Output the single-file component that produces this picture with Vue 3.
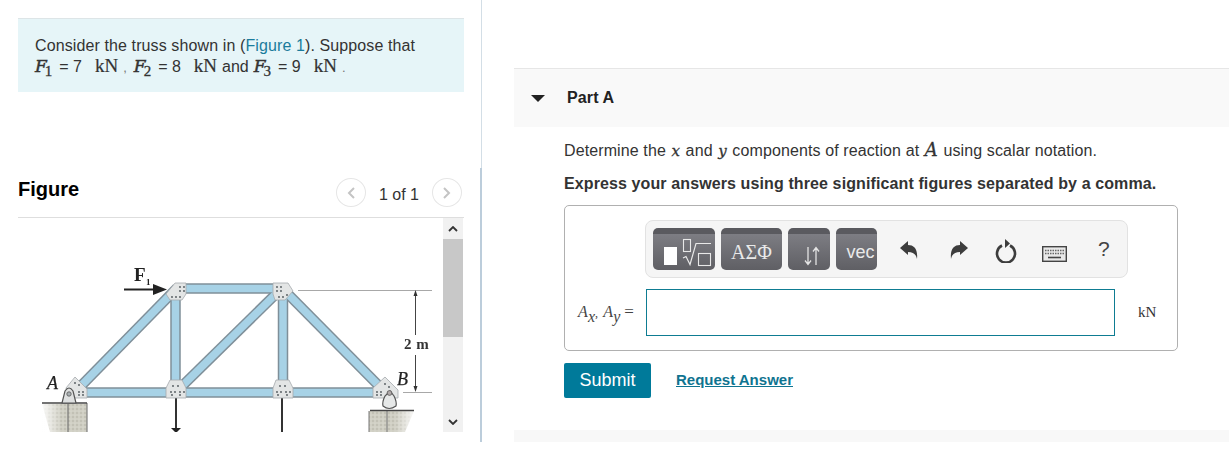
<script setup>
const gussets = [
  '175,283 186,283 186,294 182,300 170,300 166,294',
  '273,283 288,283 293,291 285,300 275,300 273,294',
  '170,380 182,380 186,388 186,398 166,398 166,388',
  '276,380 289,380 293,388 293,398 273,398 273,388',
  '75,377 87,389 87,398 68,398 66,388',
  '385,377 398,390 398,398 373,398 373,388',
]
const dots = [
  [180,287],[184,287],[180,291],[184,291],[172,297],[176,297],[180,297],
  [277,287],[281,287],[277,291],[281,291],[279,297],[283,297],[287,295],
  [173,386],[178,386],[171,392],[175,392],[180,392],[184,392],[172,395],[180,395],
  [280,386],[285,386],[277,392],[281,392],[286,392],[290,392],[278,395],[287,395],
  [75,383],[79,385],[79,392],[83,392],[79,395],[83,395],
  [385,384],[389,387],[377,392],[381,392],[377,395],[381,395],
]
const members = [
  [75,392,177,288],[176,392,282,288],[282,288,385,392],
  [177,288.5,282,288.5],[75,392.5,385,392.5],[175.5,288,175.5,392],[283,288,283,392],
]
</script>

<template>
  <div class="page">
    <section class="left">
      <div class="problem">
        <p>Consider the truss shown in (<a class="flink">Figure 1</a>). Suppose that</p>
        <p class="mline"><i class="mv">F</i><sub>1</sub><span class="eq">= 7</span><span class="unit">kN</span><span class="cm">,</span><i class="mv">F</i><sub>2</sub><span class="eq">= 8</span><span class="unit">kN</span><span class="and">and</span><i class="mv">F</i><sub>3</sub><span class="eq">= 9</span><span class="unit">kN</span><span class="cm">.</span></p>
      </div>
      <header class="fig-head">
        <h2>Figure</h2>
        <div class="pager">
          <span class="circle"><svg width="10" height="14" viewBox="0 0 10 14"><path d="M8 2 3 7l5 5" fill="none" stroke="#c4c4c4" stroke-width="2"/></svg></span>
          <span class="count">1 of 1</span>
          <span class="circle"><svg width="10" height="14" viewBox="0 0 10 14"><path d="m2 2 5 5-5 5" fill="none" stroke="#c4c4c4" stroke-width="2"/></svg></span>
        </div>
      </header>
      <div class="viewer">
        <svg class="truss" width="425" height="214" viewBox="18 218 425 214">
          <defs>
            <pattern id="stip" width="4" height="4" patternUnits="userSpaceOnUse">
              <rect width="4" height="4" fill="#d0cfc4"/>
              <circle cx="1" cy="1" r=".7" fill="#a9a89b"/>
              <circle cx="3" cy="3" r=".5" fill="#e6e5dc"/>
            </pattern>
            <linearGradient id="fadeL" x1="0" x2="1" y1="0" y2="0"><stop offset="0" stop-color="#fff" stop-opacity=".9"/><stop offset="1" stop-color="#fff" stop-opacity="0"/></linearGradient>
            <linearGradient id="fadeR" x1="0" x2="1" y1="0" y2="0"><stop offset="0" stop-color="#fff" stop-opacity="0"/><stop offset="1" stop-color="#fff" stop-opacity=".9"/></linearGradient>
          </defs>
          <g stroke="#a8a8a8" stroke-width="1" fill="none">
            <path d="M298 290.500H432M403 392.500H432"/>
          </g>
          <path d="M415.500 293V335M415.500 355V389" stroke="#444" stroke-width="1"/>
          <path d="M415.500 290l-2 6h4zM415.500 392l-2-6h4z" fill="#333"/>
          <path d="M42 404H87V432H50L46 418Z" fill="url(#stip)"/>
          <rect x="42" y="404" width="20" height="28" fill="url(#fadeL)"/>
          <path d="M68 404V432M87 403V432" stroke="#666" stroke-width="1"/>
          <path d="M369 411H414L405 432H369Z" fill="url(#stip)"/>
          <rect x="395" y="411" width="20" height="21" fill="url(#fadeR)"/>
          <path d="M369 411V432M387 411V432" stroke="#777" stroke-width="1"/>
          <path d="M42 403H87" stroke="#444" stroke-width="1.500"/>
          <path d="M370 410.500H414" stroke="#444" stroke-width="1.500"/>
          <path d="M176 398V428M282 398V432" stroke="#333" stroke-width="2"/>
          <path d="M171 428H181L176 433Z" fill="#222"/>
          <path d="M124 289.500H155" stroke="#222" stroke-width="2"/>
          <path d="M153 284L167 289.500 153 295Z" fill="#222"/>
          <g fill="none" stroke-linecap="butt">
            <line v-for="(m, i) in members" :key="'o' + i" :x1="m[0]" :y1="m[1]" :x2="m[2]" :y2="m[3]" stroke="#7f8f99" stroke-width="10.500"/>
            <line v-for="(m, i) in members" :key="'i' + i" :x1="m[0]" :y1="m[1]" :x2="m[2]" :y2="m[3]" stroke="#a7d2e6" stroke-width="7.500"/>
          </g>
          <polygon v-for="(p, i) in gussets" :key="i" :points="p" fill="#e3e5e5" stroke="#a5aaad" stroke-width="0.800"/>
          <circle v-for="(d, i) in dots" :key="'d' + i" :cx="d[0]" :cy="d[1]" r="0.900" fill="#4e555a"/>
          <path d="M62 403L65 391Q69 385 73 391L76 403Z" fill="#dfe1e1" stroke="#555" stroke-width="1.200"/>
          <circle cx="69" cy="394" r="2.200" fill="#a9b0b3" stroke="#555" stroke-width="0.800"/>
          <path d="M385 396Q382 402 383 406Q389 411 396 406Q397 402 394 396L390 391Z" fill="#e6e8e8" stroke="#555" stroke-width="1.200"/>
          <circle cx="389.500" cy="393" r="2.400" fill="#b0a9a9" stroke="#555" stroke-width="0.800"/>
          <text x="134" y="281" class="lb bold">F</text>
          <text x="146" y="285" class="lb small bold">1</text>
          <text x="47" y="389" class="lb it">A</text>
          <text x="397" y="385" class="lb it">B</text>
          <text x="404" y="349" class="lb two">2 m</text>
        </svg>
        <div class="scroll">
          <div class="sbtn"><svg width="10" height="6" viewBox="0 0 10 6"><path d="M1 5l4-4 4 4" fill="none" stroke="#333" stroke-width="1.800"/></svg></div>
          <div class="thumb"></div>
          <div class="rest"></div>
          <div class="sbtn"><svg width="10" height="6" viewBox="0 0 10 6"><path d="M1 1l4 4 4-4" fill="none" stroke="#333" stroke-width="1.800"/></svg></div>
        </div>
      </div>
    </section>

    <section class="right">
      <div class="part-head">
        <span class="tri"></span>
        <h3>Part A</h3>
      </div>
      <div class="part-body">
        <p class="q">Determine the <i class="mx">x</i> and <i class="mx">y</i> components of reaction at <i class="mx big">A</i> using scalar notation.</p>
        <p class="inst">Express your answers using three significant figures separated by a comma.</p>
        <div class="answer">
          <div class="toolbar">
            <div class="tbtn b1">
              <svg width="62" height="36" viewBox="653 234 62 36">
                <rect x="664" y="247" width="13" height="18" fill="#fff"/>
                <rect x="683.500" y="239.500" width="7" height="12" fill="none" stroke="#e8e8e8" stroke-width="1.100"/>
                <path d="M683 258l3-1.500 4 8 6-21H711" fill="none" stroke="#e8e8e8" stroke-width="1.200"/>
                <rect x="698.500" y="253.500" width="12" height="12" fill="none" stroke="#e8e8e8" stroke-width="1.100"/>
              </svg>
            </div>
            <div class="tbtn b2">ΑΣΦ</div>
            <div class="tbtn b3">
              <svg width="42" height="36" viewBox="788 234 42 36">
                <path d="M808 247V264M805 260.500l3 4 3-4M816 265V248M813 251.500l3-4 3 4" fill="none" stroke="#e4e4e4" stroke-width="1.300"/>
              </svg>
            </div>
            <div class="tbtn b4">vec</div>
            <div class="tools">
              <svg class="undo" width="18" height="20" viewBox="0 0 18 20"><path d="M0 7 8 0v4c6 0 10 4 9 14-1-5-4-7-9-7v3z" fill="#3d3d3d"/></svg>
              <svg class="redo" width="18" height="20" viewBox="0 0 18 20"><path d="M18 7 10 0v4C4 4 0 8 1 18c1-5 4-7 9-7v3z" fill="#3d3d3d"/></svg>
              <svg class="reset" width="22" height="24" viewBox="0 0 22 24"><path d="M7 6.500a9 9 0 1 0 8 0" fill="none" stroke="#3d3d3d" stroke-width="2.600"/><path d="M10 0v9l5-4.500z" fill="#3d3d3d"/></svg>
              <svg class="kbd" width="25" height="16" viewBox="0 0 25 16"><rect x=".7" y=".7" width="23.600" height="14.600" fill="#e8e8e8" stroke="#444" stroke-width="1.400"/><path d="M3 4.500H22M3 7.500H22" stroke="#666" stroke-width="1.600" stroke-dasharray="1.500 1"/><path d="M6 11.500H19" stroke="#444" stroke-width="1.600"/></svg>
              <span class="help">?</span>
            </div>
          </div>
          <div class="entry">
            <span class="lab"><i>A</i><sub><i>x</i></sub><span class="c">,</span><i>A</i><sub><i>y</i></sub><span class="e">=</span></span>
            <div class="input"></div>
            <span class="kn">kN</span>
          </div>
        </div>
        <div class="actions">
          <button class="submit">Submit</button>
          <a class="req">Request Answer</a>
        </div>
      </div>
      <div class="strip"></div>
    </section>
  </div>
</template>

<style>
html, body { margin: 0; background: #fff; }
</style>

<style scoped>
.page {
  display: flex;
  width: 1229px;
  height: 453px;
  overflow: hidden;
  background: #fff;
  font-family: "Liberation Sans", Arial, sans-serif;
  color: #333;
  font-size: 16px;
  letter-spacing: .11px;
}
p, h2, h3 { margin: 0; }
.left {
  width: 482px;
  height: 442px;
  box-sizing: border-box;
  padding: 18px 18px 0 18px;
  flex: none;
  background:
    linear-gradient(#d3dee6, #d3dee6) right top / 1px 168px no-repeat,
    linear-gradient(#bccddb, #bccddb) right 168px / 2px 274px no-repeat;
}
.problem {
  height: 74px;
  box-sizing: border-box;
  padding: 17px 17px 0;
  background: #e6f5f8;
  border-top: 1px solid #dde5e7;
  line-height: 20px;
}
.flink { color: #1b7c9c; }
.mline { white-space: nowrap; letter-spacing: 0; }
.mline sub { font: 15px/0 "Liberation Serif", serif; vertical-align: -4px; margin-left: -2px; -webkit-text-stroke: .3px #333; }
.mv { font: italic 17px/20px "DejaVu Serif", serif; -webkit-text-stroke: .5px #333; }
.eq { margin: 0 13px 0 7px; font-size: 16px; }
.unit { font: 19px/20px "Liberation Serif", serif; -webkit-text-stroke: .2px #333; }
.cm { margin: 0 7px 0 5px; color: #777; font-size: 13px; }
.and { margin: 0 5px 0 5px; }
.fig-head {
  display: flex;
  justify-content: space-between;
  align-items: center;
  height: 52px;
  margin-top: 74px;
  border-bottom: 1px solid #dedede;
  box-sizing: border-box;
}
h2 { font-size: 20px; font-weight: 700; color: #000; letter-spacing: 0; position: relative; top: -2px; }
.pager { display: flex; align-items: center; gap: 13px; margin-right: 2px; position: relative; top: 1px; }
.circle {
  width: 30px;
  height: 29px;
  border: 1px solid #e6e6e6;
  box-sizing: border-box;
  border-radius: 50%;
  display: flex;
  align-items: center;
  justify-content: center;
}
.count { font-size: 16px; color: #333; position: relative; top: 2px; letter-spacing: 0; }
.viewer { display: flex; height: 214px; overflow: hidden; }
.truss { display: block; flex: none; filter: blur(0.35px); }
.lb { font-family: "Liberation Serif", serif; fill: #222; font-size: 16px; }
.lb.bold { font-weight: 700; font-size: 19px; }
.lb.small { font-size: 9px; }
.lb.it { font-style: italic; font-size: 18px; stroke: #222; stroke-width: .25px; }
.lb.two { font-size: 15px; letter-spacing: .5px; font-weight: 700; fill: #333; }
.scroll { width: 20px; display: flex; flex-direction: column; background: #f1f1f1; }
.sbtn { height: 21px; flex: none; display: flex; align-items: center; justify-content: center; }
.thumb { height: 98px; background: #c8c8c8; flex: none; }
.rest { flex: 1; }

.right { flex: 1; padding: 68px 0 0 32px; display: flex; flex-direction: column; min-width: 0; }
.part-head {
  height: 59px;
  box-sizing: border-box;
  background: #f9f9f9;
  border-top: 1px solid #e6e6e6;
  display: flex;
  align-items: center;
  padding-left: 17px;
}
.tri {
  width: 0; height: 0;
  border-left: 7.5px solid transparent;
  border-right: 7.5px solid transparent;
  border-top: 7px solid #222;
}
h3 { font-size: 16px; font-weight: 700; color: #222; margin-left: 22px; }
.part-body { padding: 13px 51px 0 50px; height: 303px; box-sizing: border-box; }
.q { line-height: 20px; height: 20px; white-space: nowrap; }
.mx { font: italic 15px/20px "DejaVu Serif", serif; -webkit-text-stroke: .3px #333; margin: 0 1px; }
.mx.big { font-size: 18px; }
.inst { font-weight: 700; margin-top: 14px; line-height: 20px; white-space: nowrap; }
.answer {
  margin-top: 11px;
  height: 146px;
  box-sizing: border-box;
  border: 1px solid #b0b0b0;
  border-radius: 5px;
  padding: 14px 0 0 0;
}
.toolbar {
  margin-left: 80px;
  width: 483px;
  height: 58px;
  box-sizing: border-box;
  background: #f5f5f5;
  border: 1px solid #e2e2e2;
  border-radius: 8px;
  display: flex;
  align-items: center;
  padding-left: 7px;
  gap: 6px;
}
.tbtn {
  height: 42px;
  box-sizing: border-box;
  border-radius: 5px;
  border-top: 6px solid #5a5a5f;
  background: linear-gradient(#7d7d83, #5f5f64);
  color: #e9e9e9;
  display: flex;
  align-items: center;
  justify-content: center;
  flex: none;
  overflow: hidden;
}
.tbtn svg { display: block; }
.b1 { width: 62px; }
.b2 { width: 61px; font: 20px "Liberation Serif", serif; padding-top: 1px; }
.b3 { width: 42px; }
.b4 { width: 41px; font-size: 18px; letter-spacing: 0; padding-left: 8px; box-sizing: border-box; padding-top: 1px; white-space: nowrap; }
.tools { display: flex; align-items: center; margin-left: 17px; color: #444; padding-top: 3px; }
.redo { margin-left: 32px; }
.reset { margin-left: 27px; }
.kbd { margin-left: 25px; margin-top: 6px; }
.help { margin-left: 31px; font-size: 21px; color: #444; margin-top: -3px; }
.entry { display: flex; align-items: center; margin-top: 11px; height: 47px; }
.lab {
  width: 81px;
  flex: none;
  box-sizing: border-box;
  padding-left: 13px;
  font: 16px "Liberation Serif", serif;
  color: #444;
  white-space: nowrap;
  position: relative;
  top: -1px;
}
.lab sub { font-size: 16px; line-height: 0; vertical-align: -5px; }
.lab .c { font-size: 12px; margin-right: 5px; }
.lab .e { margin-left: 4px; font-size: 17px; }
.input {
  width: 469px;
  height: 47px;
  box-sizing: border-box;
  border: 1px solid #0e7c92;
  background: #fff;
  flex: none;
}
.kn { margin-left: 23px; font: 15px "Liberation Serif", serif; color: #333; }
.actions { display: flex; align-items: center; margin-top: 12px; }
.submit {
  width: 87px;
  height: 35px;
  border: 0;
  border-radius: 2px;
  background: #007a9a;
  color: #fff;
  font: 18px "Liberation Sans", Arial, sans-serif;
  padding: 0 0 1px;
}
.req {
  margin-left: 25px;
  font-weight: 700;
  font-size: 15px;
  letter-spacing: 0;
  color: #0f7490;
  text-decoration: underline;
  position: relative;
  top: -1px;
}
.strip { height: 12px; background: #f8f8f8; flex: none; }
</style>
